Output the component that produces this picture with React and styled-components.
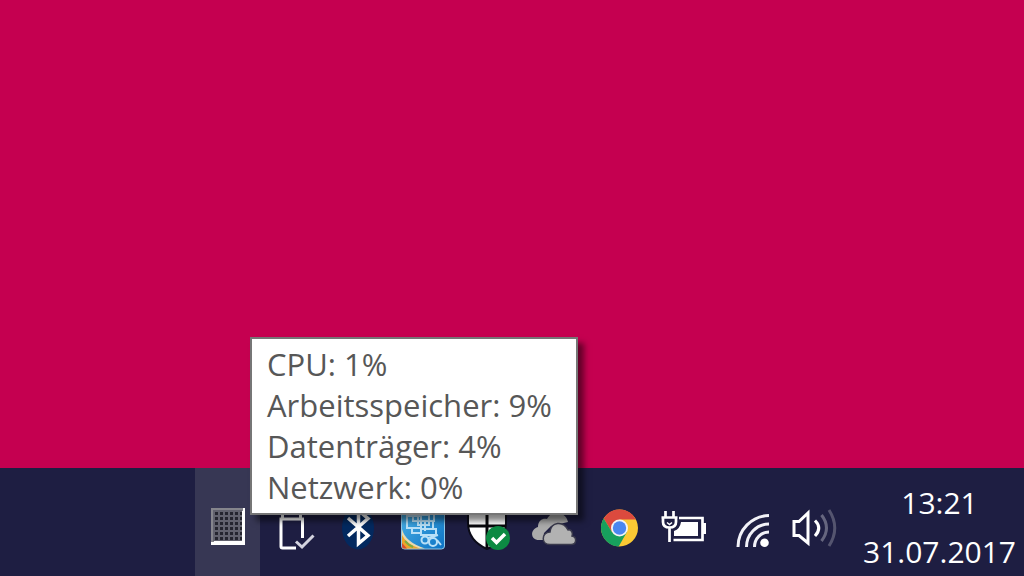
import styled, { createGlobalStyle } from "styled-components"

const GlobalStyle = createGlobalStyle`
  * {
    box-sizing: border-box;
  }
  body {
    margin: 0;
    font-family: "Open Sans", "Noto Sans", sans-serif;
  }
`

const Screen = styled.div`
  min-height: 100vh;
  display: flex;
  flex-direction: column;
  background: #c50050;
`

const Desktop = styled.main`
  flex: 1;
`

const Taskbar = styled.footer`
  display: flex;
  justify-content: flex-end;
  min-height: 97px;
  background: #1e1e42;
`

const Tray = styled.div`
  display: flex;
`

const TrayItem = styled.div`
  position: relative;
  display: flex;
`

const TrayButton = styled.button`
  display: flex;
  align-items: center;
  width: 65px;
  padding: 12px 0 0;
  border: 0;
  background: ${({ $active }) => ($active ? "#373754" : "transparent")};
  svg {
    display: block;
    width: 65px;
    height: 48px;
  }
`

const Tooltip = styled.div`
  position: absolute;
  z-index: 1;
  left: 55px;
  bottom: 61px;
  padding: 5px 24px 5px 15px;
  border: 2px solid #767676;
  background: #fff;
  box-shadow: 6px 6px 6px rgba(0, 0, 0, 0.5);
  color: #575757;
  font-size: 31px;
  line-height: 41px;
  white-space: nowrap;
`

const Clock = styled.button`
  display: flex;
  flex-direction: column;
  align-items: center;
  justify-content: center;
  padding: 10px 8px 0 18px;
  border: 0;
  background: transparent;
  color: #fff;
  font-family: inherit;
  font-size: 30px;
  line-height: 49px;
`

const TaskManagerIcon = () => (
  <svg viewBox="0 0 65 48">
    <defs>
      <pattern id="cells" x="20" y="8" width="5" height="5" patternUnits="userSpaceOnUse">
        <rect width="5" height="5" fill="#62626e" />
        <rect width="3" height="3" fill="#25252f" />
      </pattern>
    </defs>
    <rect x="16" y="4" width="34" height="37" fill="#fff" />
    <path d="M16 4H48V7H19V38H16Z" fill="#85858c" />
    <rect x="18" y="6" width="29" height="31" fill="url(#cells)" />
  </svg>
)

const UsbIcon = () => (
  <svg viewBox="0 0 65 48" fill="none" stroke="#fff" strokeWidth="3">
    <path d="M22.500 14V1.500H40.500V14" />
    <path d="M26 8h3v3h-3zM33 8h3v3h-3z" fill="#fff" stroke="none" />
    <path d="M36 44H22.500Q21 44 21 42.500V15H42.500V34" />
    <path d="M36 37.500L42 43L53.500 31.500" stroke="#d4d4df" />
  </svg>
)

const BluetoothIcon = () => (
  <svg viewBox="0 0 65 48">
    <ellipse cx="33" cy="24" rx="16" ry="21.500" fill="#03295f" />
    <path
      d="M23 14L43 31.500L33.500 39.500V6.500L43 14.500L23 32"
      fill="none"
      stroke="#fff"
      strokeWidth="3.500"
    />
  </svg>
)

const GraphicsIcon = () => (
  <svg viewBox="0 0 65 48">
    <defs>
      <linearGradient id="gfx" x1="0" y1="0" x2="1" y2="1">
        <stop offset="0" stopColor="#4fb5e8" />
        <stop offset="1" stopColor="#0b72c4" />
      </linearGradient>
    </defs>
    <rect x="11.500" y="2.500" width="43" height="42.500" rx="3" fill="url(#gfx)" stroke="#8fc6e6" />
    <path d="M12 25Q15 38 35 44.500H14Q12 44.500 12 42Z" fill="#e7d9b0" />
    <path d="M12 31Q16 40 30 44.500H14Q12 44.500 12 42Z" fill="#eda52c" />
    <path d="M12 39L17 44.500H14Q12 44.500 12 42Z" fill="#d54c35" />
    <path d="M15 37l4 4 4 2" stroke="#79ae45" strokeWidth="2" fill="none" />
    <g fill="none" stroke="#b9e0f7" strokeWidth="2">
      <path d="M23 5H44V17H23ZM17 12H31V24H17ZM28 11H39V21H28Z" />
      <path d="M31 25H46V31H31ZM35 18V27M43 17V25M22 24V29H31" />
      <circle cx="35" cy="36" r="3.500" />
      <circle cx="43" cy="38" r="4" />
      <path d="M38 34L48 31M47 36l4 5" />
    </g>
  </svg>
)

const DefenderIcon = () => (
  <svg viewBox="0 0 65 48">
    <path
      d="M32 2C27 6 20 8 13 8V19C13 32 21 40 32 45C43 40 51 32 51 19V8C44 8 37 6 32 2Z"
      fill="#fff"
      stroke="#0b0b18"
      strokeWidth="2"
    />
    <path d="M32 3V44M13 22H51" stroke="#08080c" strokeWidth="3" />
    <circle cx="43" cy="34" r="12" fill="#0c8a43" />
    <path d="M37 34l4.500 4.500L50 30" fill="none" stroke="#fff" strokeWidth="3.500" />
  </svg>
)

const CloudIcon = () => (
  <svg viewBox="0 0 65 48" fill="#ababab">
    <path d="M23 36H19C10 36 10 25 18 23C18 16 23 14 27 15C31 6 46 7 48 18L31 22L24 29Z" />
    <path
      d="M30 40.500C21 40.500 21 29 30 28C31 18 43 16 48 26C52 25 53 30 52 32C57 33 57 40.500 51 40.500Z"
      fill="#b2b2b2"
      stroke="#3a3a4c"
      strokeWidth="1.500"
    />
  </svg>
)

const ChromeIcon = () => (
  <svg viewBox="0 0 65 48">
    <circle cx="34.500" cy="24" r="18.500" fill="#fbc934" />
    <path d="M34.500 24V15.500H50.900A18.500 18.500 0 0 0 18.700 14.400L27.100 28.200Z" fill="#dc4a3e" />
    <path d="M18.700 14.400A18.500 18.500 0 0 0 33.700 42.500L41.800 28.200L34.500 24L27.100 28.200Z" fill="#17a05d" />
    <circle cx="34.500" cy="24" r="8.500" fill="#f4f4f4" />
    <circle cx="34.500" cy="24" r="6.700" fill="#4a87f0" />
  </svg>
)

const BatteryIcon = () => (
  <svg viewBox="0 0 65 48">
    <g fill="none" stroke="#fff" strokeWidth="2.700">
      <path d="M29 14H52.500V36H23.500" />
      <path d="M15.500 7V14M23.500 7V14M11.500 13.500H27.500M13 14V18Q13 23.500 19.500 23.500Q26 23.500 26 18V14M19.500 23V38" />
    </g>
    <path d="M53 19h3v11h-3zM31 18H48V32H24V27Q30 25 31 18Z" fill="#fff" />
    <path d="M17 18.500l2.500 2 2.500-2" fill="none" stroke="#fff" strokeWidth="1.500" />
  </svg>
)

const WifiIcon = () => (
  <svg viewBox="0 0 65 48" fill="none" stroke="#f2f2f8" strokeWidth="3">
    <path d="M23 43A31.500 31.500 0 0 1 54 11.500" />
    <path d="M31.500 43A22.500 23 0 0 1 54 20" />
    <path d="M39.500 43A14.500 15 0 0 1 54 28" />
    <circle cx="49.500" cy="38.700" r="4.300" fill="#fff" stroke="none" />
  </svg>
)

const VolumeIcon = () => (
  <svg viewBox="0 0 65 48" fill="none" strokeWidth="3">
    <path d="M14 17.500H19L28 9V39L19 31.500H14Z" stroke="#fff" />
    <path d="M35 16.500Q42.500 24 35 32" stroke="#fff" />
    <path d="M41.500 11Q51.500 24 41.500 37" stroke="#66667f" />
    <path d="M49 6Q60.500 24 49 42" stroke="#55556f" />
  </svg>
)

const usage = [
  ["CPU", 1],
  ["Arbeitsspeicher", 9],
  ["Datenträger", 4],
  ["Netzwerk", 0],
]

const trayIcons = [
  { label: "USB", Icon: UsbIcon },
  { label: "Bluetooth", Icon: BluetoothIcon },
  { label: "Grafik", Icon: GraphicsIcon },
  { label: "Defender", Icon: DefenderIcon },
  { label: "OneDrive", Icon: CloudIcon },
  { label: "Chrome", Icon: ChromeIcon },
  { label: "Akku", Icon: BatteryIcon },
  { label: "WLAN", Icon: WifiIcon },
  { label: "Lautstärke", Icon: VolumeIcon },
]

const App = () => {
  return (
    <Screen>
      <GlobalStyle />
      <Desktop />
      <Taskbar>
        <Tray>
          <TrayItem>
            <TrayButton $active aria-label="Task-Manager" aria-describedby="usage">
              <TaskManagerIcon />
            </TrayButton>
            <Tooltip role="tooltip" id="usage">
              {usage.map(([name, percent]) => (
                <div key={name}>{`${name}: ${percent}%`}</div>
              ))}
            </Tooltip>
          </TrayItem>
          {trayIcons.map(({ label, Icon }) => (
            <TrayButton key={label} aria-label={label}>
              <Icon />
            </TrayButton>
          ))}
        </Tray>
        <Clock>
          <span>13:21</span>
          <span>31.07.2017</span>
        </Clock>
      </Taskbar>
    </Screen>
  )
}

export default App
